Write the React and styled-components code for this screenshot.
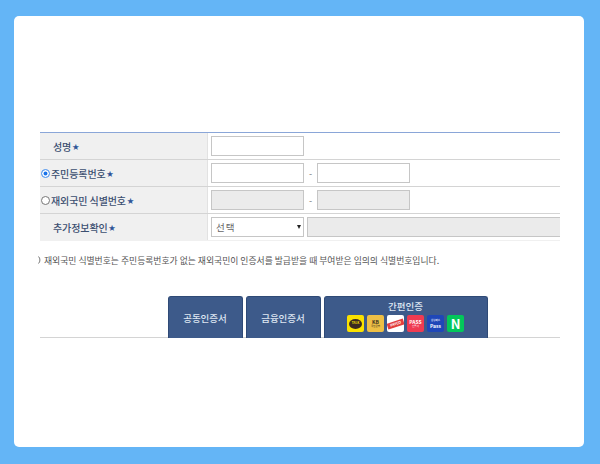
import styled, { createGlobalStyle } from "styled-components";

const GlobalStyle = createGlobalStyle`
  html, body {
    margin: 0;
    padding: 0;
    height: 100%;
    background: #64b5f6;
    font-family: "Noto Sans CJK KR", "Noto Sans", sans-serif;
  }
`;

const Panel = styled.div`
  box-sizing: border-box;
  width: 570px;
  height: 431px;
  margin: 16px 0 0 14px;
  padding: 116px 24px 0 26px;
  background: #fff;
  border-radius: 5px;
  overflow: hidden;
`;

const Form = styled.div`
  width: 520px;
  border-top: 1px solid #8aa6d8;
`;

const Row = styled.div`
  display: grid;
  grid-template-columns: 168px 352px;
  height: 26px;
  border-bottom: 1px solid ${(p) => (p.$last ? "#f0f0f0" : "#d4d4d4")};
`;

const Label = styled.div`
  display: flex;
  align-items: center;
  padding-left: ${(p) => (p.$radio ? "1px" : "13px")};
  background: #f0f0f0;
  border-right: 1px solid #e2e2e2;
  color: #3c4f70;
  font-size: 10px;
  font-weight: 500;
  letter-spacing: -0.1px;
  white-space: nowrap;
`;

const Star = styled.span`
  margin-left: 1px;
  color: #2f5597;
  font-size: 7px;
`;

const Radio = styled.span`
  box-sizing: border-box;
  flex: none;
  width: 9px;
  height: 9px;
  margin-right: 1px;
  border-radius: 50%;
  background: ${(p) => (p.$on ? "#1a73e8" : "#fff")};
  border: 1px solid ${(p) => (p.$on ? "#6aa5f0" : "#777")};
  box-shadow: ${(p) => (p.$on ? "inset 0 0 0 1.5px #fff" : "none")};
`;

const Cell = styled.div`
  display: flex;
  align-items: center;
  padding-left: 3px;
  min-width: 0;
  overflow: hidden;
`;

const Field = styled.div`
  box-sizing: border-box;
  flex: none;
  width: ${(p) => p.$width || 93}px;
  height: 20px;
  margin-left: ${(p) => (p.$width ? "3px" : "0")};
  background: ${(p) => (p.$off ? "#ebebeb" : "#fff")};
  border: 1px solid #c6c6c6;
`;

const Dash = styled.span`
  width: 13px;
  color: #777;
  font-size: 9px;
  text-align: center;
`;

const Select = styled.div`
  box-sizing: border-box;
  display: flex;
  align-items: center;
  justify-content: space-between;
  flex: none;
  width: 93px;
  height: 20px;
  padding: 0 2px 0 4px;
  border: 1px solid #c6c6c6;
  background: #fff;
  color: #666;
  font-size: 9.5px;
  letter-spacing: 1px;
`;

const Arrow = styled.span`
  width: 0;
  height: 0;
  border-left: 2.5px solid transparent;
  border-right: 2.5px solid transparent;
  border-top: 4px solid #222;
`;

const Note = styled.div`
  display: flex;
  align-items: center;
  gap: 3px;
  height: 16px;
  margin: 11px 0 28px -2px;
  color: #555;
  font-size: 8.82px;
  white-space: nowrap;
`;

const Actions = styled.div`
  box-sizing: border-box;
  display: flex;
  gap: 3px;
  width: 520px;
  height: 42px;
  padding-left: 127.5px;
  border-bottom: 1px solid #d4d4d4;
`;

const Button = styled.div`
  box-sizing: border-box;
  display: flex;
  flex-direction: column;
  align-items: center;
  justify-content: ${(p) => (p.$wide ? "flex-start" : "center")};
  width: ${(p) => (p.$wide ? "164px" : "75px")};
  height: 42px;
  padding-top: ${(p) => (p.$wide ? "2px" : "0")};
  background: #3d5a8a;
  border: 1px solid #2f4a76;
  border-bottom: none;
  border-radius: 3px 3px 0 0;
  color: #dfe7f2;
  font-size: 9.5px;
  font-weight: 500;
`;

const Tiles = styled.div`
  display: flex;
  gap: 3px;
  margin-top: 2px;
`;

const Tile = styled.div`
  box-sizing: border-box;
  display: flex;
  align-items: center;
  justify-content: center;
  width: 17px;
  height: 17px;
  border-radius: 2px;
  background: ${(p) => p.$bg};
  color: ${(p) => p.$color || "#fff"};
  font-size: ${(p) => p.$size || 5}px;
  font-weight: 700;
  line-height: 1;
  overflow: hidden;
  white-space: nowrap;
`;

const Bubble = styled.span`
  display: flex;
  align-items: center;
  justify-content: center;
  width: 13px;
  height: 10px;
  border-radius: 50%;
  background: #3b2a20;
  color: #fae100;
  font-size: 3px;
`;

const Stamp = styled.span`
  padding: 1px 3px;
  background: #e23d3d;
  color: #fff;
  font-size: 3.5px;
  transform: rotate(-18deg);
`;

const Stack = styled.span`
  display: flex;
  flex-direction: column;
  align-items: center;
  gap: 1px;
`;

const Tiny = styled.span`
  font-size: 2.5px;
  font-weight: 400;
`;

function Req() {
  return <Star>★</Star>;
}

export default function App() {
  return (
    <>
      <GlobalStyle />
      <Panel>
        <Form>
          <Row>
            <Label>
              성명
              <Req />
            </Label>
            <Cell>
              <Field />
            </Cell>
          </Row>
          <Row>
            <Label $radio>
              <Radio $on />
              주민등록번호
              <Req />
            </Label>
            <Cell>
              <Field />
              <Dash>-</Dash>
              <Field />
            </Cell>
          </Row>
          <Row>
            <Label $radio>
              <Radio />
              재외국민 식별번호
              <Req />
            </Label>
            <Cell>
              <Field $off />
              <Dash>-</Dash>
              <Field $off />
            </Cell>
          </Row>
          <Row $last>
            <Label>
              추가정보확인
              <Req />
            </Label>
            <Cell>
              <Select>
                선택
                <Arrow />
              </Select>
              <Field $off $width={270} />
            </Cell>
          </Row>
        </Form>
        <Note>
          <svg width="3" height="8" viewBox="0 0 3 8">
            <path d="M0.5 0.5 A5 5 0 0 1 0.5 7.5" fill="none" stroke="#555" strokeWidth="0.8" />
          </svg>
          재외국민 식별번호는 주민등록번호가 없는 재외국민이 인증서를 발급받을 때 부여받은 임의의 식별번호입니다.
        </Note>
        <Actions>
          <Button>공동인증서</Button>
          <Button>금융인증서</Button>
          <Button $wide>
            간편인증
            <Tiles>
              <Tile $bg="#fae100">
                <Bubble>TALK</Bubble>
              </Tile>
              <Tile $bg="#eebf45" $color="#3a3020">
                <Stack>
                  <span>KB</span>
                  <Tiny>국민은행</Tiny>
                </Stack>
              </Tile>
              <Tile $bg="#fff">
                <Stamp>PAYCO</Stamp>
              </Tile>
              <Tile $bg="#ef3b52">
                <Stack>
                  <span>PASS</span>
                  <Tiny>인증서</Tiny>
                </Stack>
              </Tile>
              <Tile $bg="#1f47b8">
                <Stack>
                  <Tiny>삼성패스</Tiny>
                  <span>Pass</span>
                </Stack>
              </Tile>
              <Tile $bg="#03c75a" $size={13}>
                N
              </Tile>
            </Tiles>
          </Button>
        </Actions>
      </Panel>
    </>
  );
}
